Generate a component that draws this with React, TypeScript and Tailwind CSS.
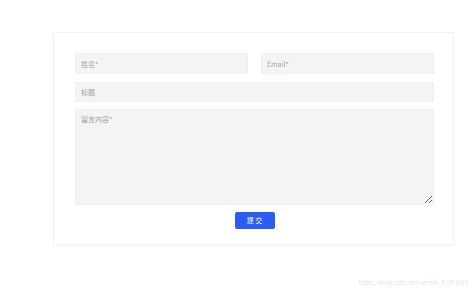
import React from "react";

export default function App() {
  const field =
    "bg-[#f5f4f2] border border-[#f0efed] outline-none px-[5px] text-[7px] text-[#888] placeholder:text-[#a3a3a3] rounded-none";
  return (
    <div
      className="w-[474px] h-[292px] bg-white relative overflow-hidden"
      style={{ fontFamily: '"Noto Sans CJK SC", "Liberation Sans", sans-serif' }}
    >
      <div className="pt-[32px] pl-[53px]">
        <div className="w-[401px] h-[213px] border border-[#f3f3f3] shadow-[0_1px_3px_rgba(0,0,0,0.04)] bg-white pt-[20px] pl-[21px] pr-[19px] flex flex-col">
          <div className="flex gap-[13px]">
            <input className={`${field} w-[173px] h-[21px]`} placeholder="姓名*" readOnly />
            <input className={`${field} flex-1 h-[21px]`} placeholder="Email*" readOnly />
          </div>
          <input className={`${field} mt-[8px] h-[20px]`} placeholder="标题" readOnly />
          <textarea
            className={`${field} mt-[7px] h-[96px] pt-[4px] resize-y`}
            placeholder="留言内容*"
            readOnly
          />
          <div className="flex justify-center mt-[7px]">
            <button className="w-[40px] h-[17px] bg-[#2c5cf6] text-white text-[7px] rounded-[2px] leading-none flex items-center justify-center">
              提 交
            </button>
          </div>
        </div>
      </div>
      <div className="absolute right-[6px] top-[280px] text-[6px] text-[#e6e6e6] leading-none">
        https://blog.csdn.net/weixin_41891983
      </div>
    </div>
  );
}
